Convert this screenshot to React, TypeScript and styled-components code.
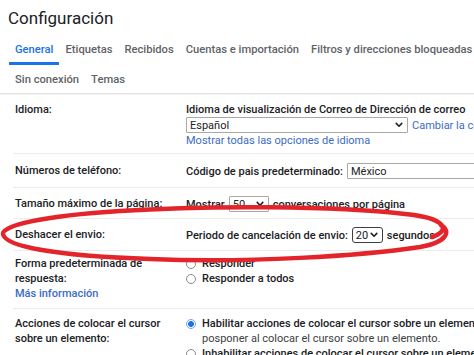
import React from "react";
import styled, { createGlobalStyle } from "styled-components";

const Global = createGlobalStyle`
  html, body {
    margin: 0;
    padding: 0;
    background: #ffffff;
  }
  body {
    font-family: Roboto, "Noto Sans", Arial, sans-serif;
    color: #202124;
    overflow: hidden;
  }
`;

const Page = styled.div`
  position: relative;
  width: 474px;
  height: 355px;
  overflow: hidden;
  background: #fff;
`;

const Title = styled.h1`
  margin: 0;
  padding: 7px 0 0 8px;
  height: 28px;
  font-size: 17px;
  line-height: 22px;
  font-weight: 400;
  color: #202124;
`;

const Tabs = styled.nav`
  border-bottom: 1px solid #e4e4e4;
  box-shadow: 0 1px 1px rgba(0, 0, 0, 0.04);
`;

const TabRow = styled.div`
  display: flex;
  padding-left: 9px;
  white-space: nowrap;
  overflow: hidden;
`;

const Tab = styled.span<{ $active?: boolean }>`
  padding: 2px 6px 0;
  font-size: 11.2px;
  font-weight: 500;
  line-height: 25px;
  height: 25px;
  color: ${(p) => (p.$active ? "#1a73e8" : "#5f6368")};
  border-bottom: 3px solid ${(p) => (p.$active ? "#1a73e8" : "transparent")};
`;

const SubTab = styled.span`
  padding: 7px 6px 6px;
  font-size: 11.2px;
  font-weight: 500;
  line-height: 15px;
  color: #5f6368;
`;

const Content = styled.div`
  padding-left: 13px;
`;

const Row = styled.div<{ $pad: string }>`
  display: grid;
  grid-template-columns: 173px 1fr;
  padding: ${(p) => p.$pad};
  border-bottom: 1px solid #ececec;
  font-size: 11px;
  line-height: 15px;
`;

const Label = styled.div`
  padding-left: 2px;
  font-weight: 500;
  color: #202124;
`;

const Value = styled.div`
  min-width: 0;
  white-space: nowrap;
  overflow: hidden;
`;

const Line = styled.div`
  display: flex;
  align-items: center;
  gap: 4px;
`;

const Strong = styled.span`
  font-weight: 500;
  color: #202124;
`;

const Plain = styled.span`
  color: #3c4043;
`;

const A = styled.span`
  color: #3b6cc6;
`;

const SelectBox = styled.span<{ $w: number; $dark?: boolean }>`
  display: inline-flex;
  align-items: center;
  justify-content: space-between;
  flex: none;
  box-sizing: border-box;
  width: ${(p) => p.$w}px;
  height: 16px;
  padding: 0 4px 0 3px;
  border: 1px solid ${(p) => (p.$dark ? "#3c4043" : "#a8a8a8")};
  border-radius: ${(p) => (p.$dark ? 3 : 1)}px;
  font-size: 11px;
  color: #202124;
  background: #fff;
`;

const RadioLine = styled.div`
  display: flex;
  align-items: center;
  gap: 6px;
`;

const Radio = styled.span<{ $on?: boolean }>`
  flex: none;
  box-sizing: border-box;
  width: 10px;
  height: 10px;
  border-radius: 50%;
  border: 1px solid ${(p) => (p.$on ? "#7aa5ee" : "#8a8a8a")};
  background: ${(p) =>
    p.$on ? "radial-gradient(circle, #1a73e8 0 2.6px, #ffffff 3.2px)" : "#fff"};
`;

const Indent = styled.div`
  padding-left: 16px;
`;

// hand drawn red mark over the page
const Ellipse = styled.svg`
  position: absolute;
  left: 0;
  top: 0;
  pointer-events: none;
`;

const Chevron = () => (
  <svg width="8" height="6" viewBox="0 0 8 6">
    <path d="M1.2 1.4 4 4.2 6.8 1.4" fill="none" stroke="#202124" strokeWidth="1.6" strokeLinecap="round" strokeLinejoin="round" />
  </svg>
);

const Select = ({ value, w, dark }: { value: string; w: number; dark?: boolean }) => (
  <SelectBox $w={w} $dark={dark}>
    <span>{value}</span>
    <Chevron />
  </SelectBox>
);

export default function App() {
  return (
    <Page>
      <Global />
      <Title>Configuración</Title>
      <Tabs>
        <TabRow>
          <Tab $active>General</Tab>
          <Tab>Etiquetas</Tab>
          <Tab>Recibidos</Tab>
          <Tab>Cuentas e importación</Tab>
          <Tab>Filtros y direcciones bloqueadas</Tab>
          <Tab>Reenvío y correo POP/IMAP</Tab>
        </TabRow>
        <TabRow>
          <SubTab>Sin conexión</SubTab>
          <SubTab>Temas</SubTab>
        </TabRow>
      </Tabs>
      <Content>
        <Row $pad="8px 0 5px">
          <Label>Idioma:</Label>
          <Value>
            <Strong>Idioma de visualización de Correo de Dirección de correo</Strong>
            <Line>
              <Select value="Español" w={222} />
              <A>Cambiar la configuración de idioma de otros productos</A>
            </Line>
            <A>Mostrar todas las opciones de idioma</A>
          </Value>
        </Row>
        <Row $pad="9px 0 8px">
          <Label>Números de teléfono:</Label>
          <Value>
            <Line>
              <Strong>Código de pais predeterminado:</Strong>
              <SelectBox $w={140}>México</SelectBox>
            </Line>
          </Value>
        </Row>
        <Row $pad="8px 0 6px">
          <Label>Tamaño máximo de la página:</Label>
          <Value>
            <Line>
              <Strong>Mostrar</Strong>
              <Select value="50" w={40} />
              <Strong>conversaciones por página</Strong>
            </Line>
          </Value>
        </Row>
        <Row $pad="8px 0 7px">
          <Label>Deshacer el envio:</Label>
          <Value>
            <Line>
              <Strong>Periodo de cancelación de envio:</Strong>
              <Select value="20" w={31} dark />
              <Strong>segundos</Strong>
            </Line>
          </Value>
        </Row>
        <Row $pad="5px 0 7px">
          <Label>
            Forma predeterminada de
            <br />
            respuesta:
            <br />
            <A>Más información</A>
          </Label>
          <Value>
            <RadioLine>
              <Radio />
              <Strong>Responder</Strong>
            </RadioLine>
            <RadioLine>
              <Radio />
              <Strong>Responder a todos</Strong>
            </RadioLine>
          </Value>
        </Row>
        <Row $pad="7px 0 8px">
          <Label>
            Acciones de colocar el cursor
            <br />
            sobre un elemento:
          </Label>
          <Value>
            <RadioLine>
              <Radio $on />
              <Strong>Habilitar acciones de colocar el cursor sobre un elemento</Strong>
            </RadioLine>
            <Indent>
              <Plain>posponer al colocar el cursor sobre un elemento.</Plain>
            </Indent>
            <RadioLine>
              <Radio />
              <Strong>Inhabilitar acciones de colocar el cursor sobre un elemento</Strong>
            </RadioLine>
          </Value>
        </Row>
      </Content>
      <Ellipse width="474" height="355" viewBox="0 0 474 355">
        <path
          d="M432 237 C 451 231, 447 218, 405 214 C 335 206, 210 205, 120 211 C 40 216, 2 226, 3 234 C 5 247, 60 256, 150 259 C 250 263, 360 256, 420 247 C 448 242, 451 231, 441 225"
          fill="none"
          stroke="#e3252b"
          strokeWidth="4.5"
          strokeLinecap="round"
        />
      </Ellipse>
    </Page>
  );
}
